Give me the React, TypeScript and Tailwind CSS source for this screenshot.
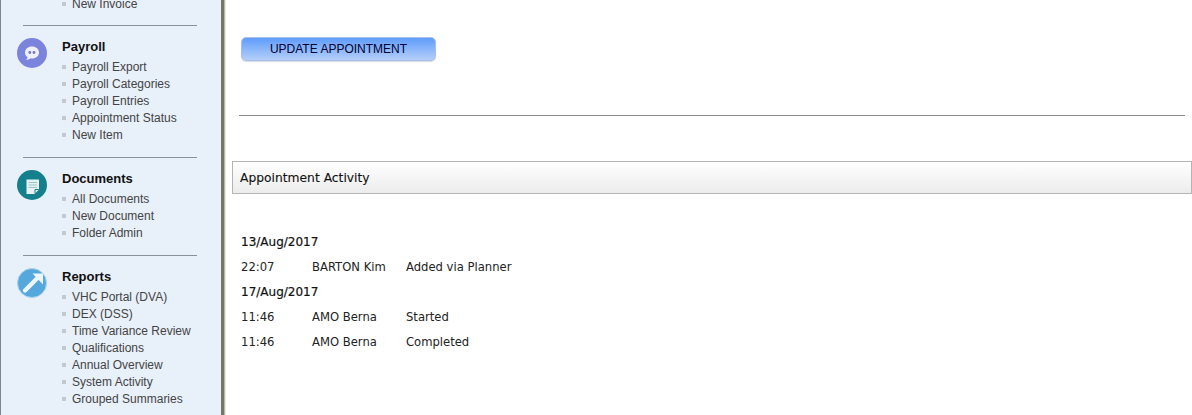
const sections = [
  { title: "Payroll", icon: "chat", items: ["Payroll Export", "Payroll Categories", "Payroll Entries", "Appointment Status", "New Item"] },
  { title: "Documents", icon: "doc", items: ["All Documents", "New Document", "Folder Admin"] },
  { title: "Reports", icon: "arrow", items: ["VHC Portal (DVA)", "DEX (DSS)", "Time Variance Review", "Qualifications", "Annual Overview", "System Activity", "Grouped Summaries"] },
];

function Icon({ kind }: { kind: string }) {
  if (kind === "chat")
    return (
      <svg width="30" height="30" viewBox="0 0 30 30" className="block">
        <circle cx="15" cy="15" r="15" fill="#7b84dc" />
        <path d="M15 8.500c-4 0-7 2.600-7 6 0 2 1 3.600 2.600 4.700-.2 1.100-.8 2-1.600 2.800 1.800-.1 3.300-.8 4.400-1.700.5.100 1 .2 1.600.2 4 0 7-2.600 7-6s-3-6-7-6z" fill="#eef0fb" />
        <circle cx="12.800" cy="14.500" r="1.400" fill="#6f77c8" />
        <circle cx="17" cy="14.500" r="1.400" fill="#6f77c8" />
      </svg>
    );
  if (kind === "doc")
    return (
      <svg width="30" height="30" viewBox="0 0 30 30" className="block">
        <circle cx="15" cy="15" r="15" fill="#14808c" />
        <path d="M9.500 9.500h12.500v10l-4.500 4.500h-8z" fill="#e6f2f3" />
        <path d="M11.500 12.500h8.500M11.500 15h8.500M11.500 17.500h8.500" stroke="#9cc5ca" strokeWidth="1.200" />
        <path d="M18 23.500v-4h3.700" fill="none" stroke="#14808c" strokeWidth="1" />
      </svg>
    );
  return (
    <svg width="30" height="30" viewBox="0 0 30 30" className="block">
      <circle cx="15" cy="15" r="14.500" fill="#55a8dc" stroke="#a9d2ec" strokeWidth="1" />
      <path d="M8 22.500l12-12" stroke="#eef6fb" strokeWidth="4.400" strokeLinecap="round" />
      <path d="M15.500 5.500h10.500v11z" fill="#eef6fb" />
    </svg>
  );
}

function Item({ label }: { label: string }) {
  return (
    <li className="flex h-[17px] items-center">
      <span className="mr-[6px] h-1 w-1 bg-[#c2c8cf]" />
      <span>{label}</span>
    </li>
  );
}

function Divider() {
  return <div className="ml-[22px] h-px w-[174px] bg-[#8a8f98]" />;
}

const rows = [
  { date: "13/Aug/2017" },
  { time: "22:07", who: "BARTON Kim", what: "Added via Planner" },
  { date: "17/Aug/2017" },
  { time: "11:46", who: "AMO Berna", what: "Started" },
  { time: "11:46", who: "AMO Berna", what: "Completed" },
];

export default function App() {
  return (
    <div className="flex h-[415px] w-[1192px] overflow-hidden bg-white">
      <aside className="h-full w-[224px] shrink-0 border-l border-r-[3px] border-l-[#80858f] border-r-[#74766a] bg-[#e8f0fa] font-['Liberation_Sans',sans-serif] text-[12px] text-[#444] shadow-[1px_0_0_#b9baa6,2px_0_0_#e9e9e0]">
        <ul className="mb-[13px] -mt-[5px] pl-[61px]">
          <Item label="New Invoice" />
        </ul>
        {sections.map((s) => (
          <div key={s.title}>
            <Divider />
            <div className="flex pb-[14px] pl-[16px] pt-[12px]">
              <div className="mr-[15px]"><Icon kind={s.icon} /></div>
              <div>
                <h3 className="mb-[3px] h-[17px] text-[13px] leading-[17px] font-bold text-[#111]">{s.title}</h3>
                <ul>
                  {s.items.map((it) => (
                    <Item key={it} label={it} />
                  ))}
                </ul>
              </div>
            </div>
          </div>
        ))}
      </aside>
      <main className="min-w-0 flex-1 pl-[8px] font-['DejaVu_Sans',sans-serif] text-[11.6px] text-[#222]">
        <div className="pl-[9px] pt-[37px]">
          <button className="h-[24px] w-[195px] rounded-[5px] border border-[#a9c1e6] bg-gradient-to-b from-[#5f9cfb] to-[#b4cef8] font-['Liberation_Sans',sans-serif] text-[12px] text-[#000030] shadow-[0_1px_1px_#d5d9e2]">
            UPDATE APPOINTMENT
          </button>
        </div>
        <div className="ml-[7px] mt-[54px] h-px w-[946px] bg-[#8c8c8c]" />
        <div className="mt-[45px] flex h-[33px] w-[960px] items-center border border-[#b4b4b4] bg-gradient-to-b from-white to-[#ececec] pl-[7px] pt-px text-[12.3px] text-[#111] [-webkit-text-stroke:0.1px_#111]">
          Appointment Activity
        </div>
        <div className="pl-[9px] pt-[35px]">
          {rows.map((r, i) =>
            r.date ? (
              <div key={i} className="flex h-[25px] items-center text-[12px] text-[#111] [-webkit-text-stroke:0.2px_#111]">{r.date}</div>
            ) : (
              <div key={i} className="flex h-[25px] items-center pt-[2px]">
                <span className="w-[71px]">{r.time}</span>
                <span className="w-[94px]">{r.who}</span>
                <span>{r.what}</span>
              </div>
            )
          )}
        </div>
      </main>
    </div>
  );
}
